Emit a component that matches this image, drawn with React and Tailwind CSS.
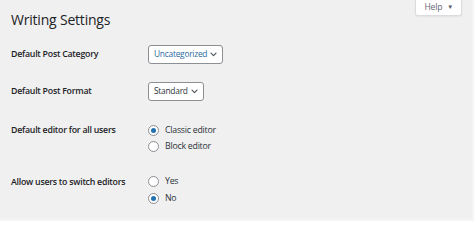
const Chevron = () => (
  <svg width="7" height="5" viewBox="0 0 7 5" className="text-[#50575e]">
    <path d="M1 1.2l2.5 2.5L6 1.2" fill="none" stroke="currentColor" strokeWidth="1.2" strokeLinecap="round" strokeLinejoin="round" />
  </svg>
);

const Select = ({ value, blue }) => (
  <div className="flex items-center h-[19px] bg-white border border-[#8c8f94] rounded-[3px] pl-[5px] pr-[5px] gap-[3px]">
    <span className={`text-[8.4px] tracking-[-0.25px] leading-none ${blue ? "text-[#2c6aa0]" : "text-[#2c3338]"}`}>{value}</span>
    <Chevron />
  </div>
);

const Radio = ({ label, checked }) => (
  <label className="flex items-center h-[16.5px] gap-[6px]">
    <span className="w-[11px] h-[11px] rounded-full bg-white border border-[#8c8f94] flex items-center justify-center">
      {checked && <span className="w-[5px] h-[5px] rounded-full bg-[#2271b1]" />}
    </span>
    <span className="text-[8.8px] tracking-[-0.25px] text-[#2c3338]">{label}</span>
  </label>
);

const Row = ({ label, children, className = "", top }) => (
  <div className={`grid grid-cols-[137px_1fr] ${top ? "items-start" : "items-center"} ${className}`}>
    <div className={`text-[8.8px] tracking-[-0.25px] font-semibold text-[#1d2327] ${top ? "pt-[2px]" : ""}`}>{label}</div>
    <div>{children}</div>
  </div>
);

export default function App() {
  return (
    <div className="h-[221px] bg-[#f0f0f1] border-r-2 border-b-2 border-[#f5f5f6] font-['Open_Sans',sans-serif] overflow-hidden">
      <div className="flex justify-between items-start pl-[11px] pr-[10px]">
        <h1 className="pt-[10px] text-[14px] tracking-[-0.2px] leading-[20px] text-[#1d2327]">Writing Settings</h1>
        <button className="flex items-center gap-[5px] h-[16px] px-[8px] bg-white border border-t-0 border-[#dcdcde] rounded-b-[3px] shadow-[0_1px_2px_rgba(0,0,0,0.06)] text-[8.6px] tracking-[-0.2px] text-[#646970]">
          Help
          <span className="text-[6px] text-[#50575e]">▼</span>
        </button>
      </div>
      <div className="pl-[11px]">
        <Row label="Default Post Category" className="mt-[15px] h-[19px]">
          <div className="flex"><Select value="Uncategorized" blue /></div>
        </Row>
        <Row label="Default Post Format" className="mt-[18px] h-[19px]">
          <div className="flex"><Select value="Standard" /></div>
        </Row>
        <Row label="Default editor for all users" className="mt-[21px]" top>
          <Radio label="Classic editor" checked />
          <Radio label="Block editor" />
        </Row>
        <Row label="Allow users to switch editors" className="mt-[18.5px]" top>
          <Radio label="Yes" />
          <Radio label="No" checked />
        </Row>
      </div>
    </div>
  );
}
